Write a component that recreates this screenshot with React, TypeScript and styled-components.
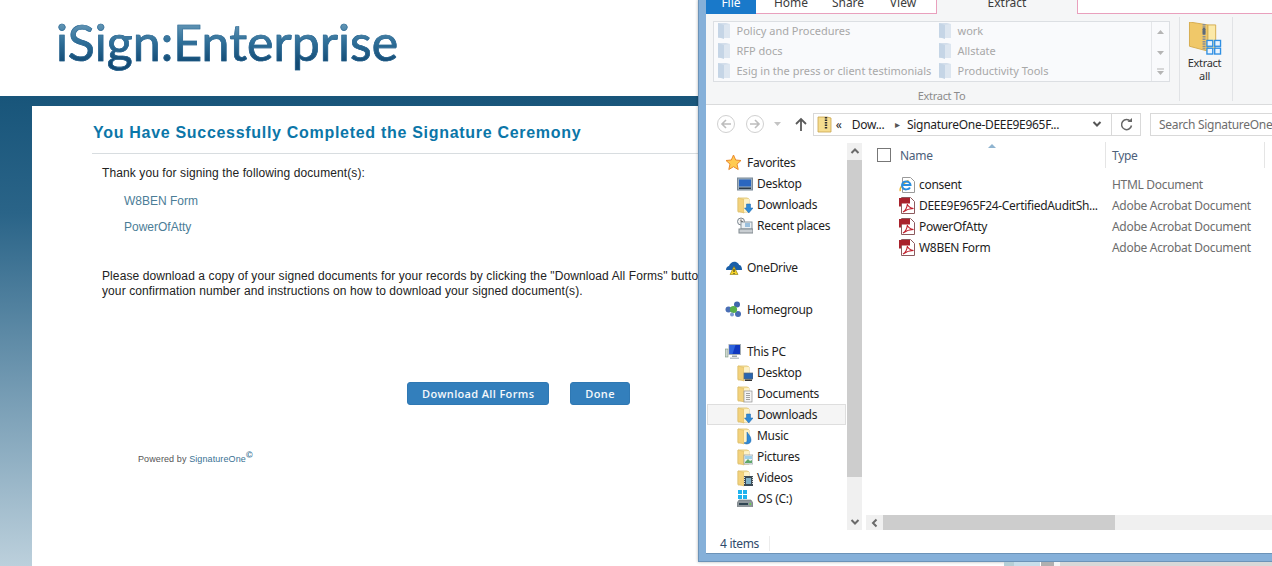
import React from 'react'
import styled, { createGlobalStyle } from 'styled-components'

const Global = createGlobalStyle`
  html, body {
    margin: 0;
    padding: 0;
    height: 566px;
    overflow: hidden;
    background: #fff;
  }
  * { box-sizing: border-box; }
`

const uiFont = `"Noto Sans", "Open Sans", sans-serif`
const webFont = `"Liberation Sans", Arial, sans-serif`

/* ---------- web page behind the explorer window ---------- */

const Page = styled.div`
  position: relative;
  width: 1272px;
  height: 566px;
  overflow: hidden;
  font-family: ${webFont};
`

const Header = styled.header`
  height: 96px;
  padding: 12px 0 0 56px;
  background: #fff;
`

const Logo = styled.div`
  display: inline-block;
  font-family: Lato, "Open Sans", sans-serif;
  font-size: 50px;
  line-height: 60px;
  letter-spacing: 0.05px;
  color: transparent;
  -webkit-text-stroke: 0.7px rgba(40, 100, 145, 0.75);
  background: linear-gradient(#6f9fbc 12%, #2f6f98 50%, #124a74 85%);
  -webkit-background-clip: text;
  background-clip: text;
`

const Band = styled.div`
  height: 470px;
  padding: 10px 0 0 32px;
  background: linear-gradient(#18557a 0%, #2a6488 25%, #6f97b0 60%, #bcd0dc 100%);
`

const Card = styled.main`
  height: 460px;
  padding: 16px 0 0 60px;
  background: #fff;
`

const Title = styled.h1`
  margin: 0 0 0 1px;
  font-size: 16px;
  line-height: 22px;
  font-weight: 700;
  letter-spacing: 0.7px;
  color: #0b76a8;
`

const Rule = styled.hr`
  height: 1px;
  margin: 9px 0 0 0;
  border: 0;
  background: #d8dde0;
`

const Lead = styled.p`
  margin: 12px 0 0 10px;
  font-size: 12px;
  line-height: 15px;
  letter-spacing: 0.1px;
  color: #222;
`

const DocLink = styled.a`
  display: block;
  margin: 0 0 11px 32px;
  font-size: 12px;
  line-height: 15px;
  color: #4b7d97;
`

const DocList = styled.div`
  margin-top: 13px;
`

const Instructions = styled.p`
  margin: 34px 0 0 10px;
  font-size: 12px;
  line-height: 15px;
  letter-spacing: 0.1px;
  color: #222;
  white-space: nowrap;
`

const Actions = styled.div`
  display: flex;
  gap: 21px;
  margin: 83px 0 0 315px;
`

const ActionButton = styled.button`
  height: 23px;
  padding: 0 14px;
  border: 1px solid #2f78b3;
  border-radius: 3px;
  background: #337fbc;
  color: #f4f8fb;
  font-family: "Open Sans", sans-serif;
  font-size: 11px;
  font-weight: 600;
  letter-spacing: 0.35px;
`

const Powered = styled.p`
  margin: 48px 0 0 46px;
  font-size: 9px;
  line-height: 12px;
  color: #555;
  letter-spacing: 0.1px;
  span { color: #3a7294; }
  sup { font-size: 9px; font-weight: 700; line-height: 0; color: #3a7294; }
`

/* ---------- explorer window ---------- */

const Explorer = styled.section`
  position: absolute;
  left: 698px;
  top: -1px;
  width: 574px;
  height: 563px;
  padding: 1px 0 7px 7px;
  display: flex;
  background: #85b0d9;
  border-left: 1px solid #6c93b8;
  border-bottom: 1px solid #6c93b8;
  box-shadow: 0 0 3px rgba(0, 0, 0, 0.3);
  font-family: ${uiFont};
  font-size: 12px;
  letter-spacing: -0.3px;
`

const ExplorerInner = styled.div`
  flex: 1;
  min-width: 0;
  display: flex;
  flex-direction: column;
  background: #fff;
  border-bottom: 1px solid #6c93b8;
`

const TabStrip = styled.nav`
  height: 14px;
  flex: none;
  display: flex;
  overflow: hidden;
  line-height: 6px;
  letter-spacing: 0;
  background: #fff;
  color: #3c3c3c;
`

const Tab = styled.div<{ $w: number }>`
  width: ${p => p.$w}px;
  flex: none;
  text-align: center;
  border-bottom: 1px solid #e9a0bd;
`

const FileTab = styled(Tab)`
  background: #1979ca;
  color: #fff;
  border-bottom: 0;
`

const ContextTab = styled(Tab)`
  background: #f5f6f7;
  border-bottom: 0;
  border-left: 1px solid #e9a0bd;
  border-right: 1px solid #e9a0bd;
`

const TabFill = styled.div`
  flex: 1;
  border-bottom: 1px solid #e9a0bd;
`

const Ribbon = styled.div`
  height: 91px;
  flex: none;
  display: flex;
  padding: 3px 0 0 7px;
  background: #f5f6f7;
  border-bottom: 1px solid #dadbdc;
`

const RibbonGroup = styled.div`
  width: 467px;
  height: 84px;
  display: flex;
  flex-direction: column;
  align-items: center;
  border-right: 1px solid #e1e3e6;
`

const Gallery = styled.div`
  width: 457px;
  height: 61px;
  margin: 4px 10px 0 0;
  display: flex;
  background: #f9fafc;
  border: 1px solid #dcdfe3;
`

const GalleryGrid = styled.div`
  flex: 1;
  margin-top: -2px;
  display: grid;
  grid-template-columns: 221px 1fr;
  grid-auto-rows: 20px;
`

const GalleryItem = styled.div`
  display: flex;
  align-items: center;
  gap: 5px;
  padding-left: 3px;
  color: #a8a8a8;
  font-size: 11px;
  letter-spacing: 0;
  white-space: nowrap;
`

const GalleryScroll = styled.div`
  width: 18px;
  flex: none;
  display: grid;
  grid-auto-rows: 20px;
  place-items: center;
  border-left: 1px solid #e4e6e9;
`

const GroupLabel = styled.div`
  margin: 6px 9px 0 0;
  line-height: 16px;
  font-size: 11px;
  color: #8c8c8c;
`

const ExtractGroup = styled.div`
  width: 53px;
  height: 84px;
  display: flex;
  flex-direction: column;
  align-items: center;
  padding: 5px 3px 0 0;
  border-right: 1px solid #e1e3e6;
  color: #333;
  font-size: 11px;
  line-height: 13px;
  text-align: center;
`

const ExtractLabel = styled.div`
  margin-top: 1px;
`

const Toolbar = styled.div`
  height: 37px;
  flex: none;
  display: flex;
  align-items: center;
  padding: 1px 0 0 11px;
  background: #fff;
`

const NavCircle = styled.div`
  width: 18px;
  height: 18px;
  margin-right: 11px;
  display: grid;
  place-items: center;
  border: 1px solid #d0d0d0;
  border-radius: 50%;
`

const AddressBox = styled.div`
  width: 328px;
  height: 23px;
  display: flex;
  align-items: center;
  padding-left: 3px;
  border: 1px solid #d9d9d9;
  color: #1e1e1e;
`

const Crumb = styled.span<{ $w: number }>`
  width: ${p => p.$w}px;
  flex: none;
  white-space: nowrap;
`

const CrumbArrow = styled(Crumb)`
  padding-left: 4px;
  font-size: 10px;
  color: #555;
`

const AddressEnd = styled.div`
  width: 29px;
  height: 21px;
  flex: none;
  display: grid;
  place-items: center;
  margin-left: auto;
`

const RefreshCell = styled(AddressEnd)`
  margin-left: 0;
  border-left: 1px solid #d9d9d9;
`

const SearchBox = styled.div`
  flex: 1;
  min-width: 0;
  height: 23px;
  margin-left: 9px;
  padding-left: 8px;
  border: 1px solid #d9d9d9;
  border-right: 0;
  line-height: 21px;
  color: #6d6d6d;
  white-space: nowrap;
  overflow: hidden;
`

const Main = styled.div`
  flex: 1;
  min-height: 0;
  display: flex;
  padding-bottom: 4px;
`

const NavPane = styled.aside`
  width: 141px;
  flex: none;
  padding: 10px 1px 0 1px;
`

const NavGroup = styled.div`
  margin-bottom: 21px;
`

const NavRow = styled.div<{ $child?: boolean; $active?: boolean }>`
  height: 21px;
  display: flex;
  align-items: center;
  gap: ${p => (p.$child ? 4 : 5)}px;
  padding-left: ${p => (p.$child ? 30 : 18)}px;
  color: #1e1e1e;
  white-space: nowrap;
  background: ${p => (p.$active ? '#f5f5f5' : 'transparent')};
  box-shadow: ${p => (p.$active ? 'inset 0 0 0 1px #dedede' : 'none')};
`

const VScroll = styled.div`
  width: 15px;
  flex: none;
  display: flex;
  flex-direction: column;
  background: #f0f0f0;
  margin-right: 4px;
  margin-top: 1px;
`

const ScrollArrow = styled.div`
  height: 17px;
  flex: none;
  display: grid;
  place-items: center;
`

const VThumb = styled.div`
  height: 317px;
  flex: none;
  background: #cdcdcd;
`

const Files = styled.div`
  flex: 1;
  min-width: 0;
  display: flex;
  flex-direction: column;
`

const ColumnHeader = styled.div`
  position: relative;
  height: 32px;
  flex: none;
  display: grid;
  grid-template-columns: 240px 159px 1fr;
  align-items: start;
  color: #4c607a;
`

const NameHead = styled.div`
  display: flex;
  align-items: center;
  gap: 9px;
  height: 26px;
  padding-left: 11px;
  border-right: 1px solid #e5e5e5;
`

const TypeHead = styled.div`
  height: 26px;
  line-height: 28px;
  padding-left: 6px;
  border-right: 1px solid #e5e5e5;
`

const SortMark = styled.svg`
  position: absolute;
  left: 122px;
  top: 2px;
`

const Check = styled.div`
  width: 14px;
  height: 14px;
  border: 1px solid #777;
`

const Rows = styled.div`
  flex: 1;
`

const FileRow = styled.div`
  height: 21px;
  display: grid;
  grid-template-columns: 240px 1fr;
  align-items: center;
`

const FileName = styled.div`
  display: flex;
  align-items: center;
  gap: 4px;
  padding-left: 33px;
  color: #1e1e1e;
  white-space: nowrap;
`

const FileType = styled.div`
  padding-left: 6px;
  color: #6d6d6d;
  white-space: nowrap;
`

const HScroll = styled.div`
  height: 15px;
  flex: none;
  display: flex;
  background: #f0f0f0;
`

const HArrow = styled.div`
  width: 17px;
  flex: none;
  display: grid;
  place-items: center;
`

const HThumb = styled.div`
  width: 232px;
  background: #cdcdcd;
`

const StatusBar = styled.footer`
  height: 19px;
  flex: none;
  display: flex;
  align-items: center;
  padding-left: 14px;
  color: #2f4a6b;
`

const StatusSep = styled.div`
  width: 1px;
  height: 15px;
  margin-left: 10px;
  background: #ececec;
`

const BackWindow = styled.div`
  position: absolute;
  left: 1004px;
  top: 562px;
  right: 0;
  height: 4px;
  display: flex;
`

const BackSliver = styled.div<{ $w?: number; $c: string }>`
  flex: ${p => (p.$w ? `0 0 ${p.$w}px` : 1)};
  background: ${p => p.$c};
`

/* ---------- icons ---------- */

type Overlay = 'download' | 'desktop' | 'docs' | 'music' | 'pictures' | 'videos'

const FolderIcon = ({ overlay }: { overlay?: Overlay }) => (
  <svg width="16" height="18" viewBox="0 0 16 18">
    <path d="M1 2h9l2 1v13H1z" fill="#fbe9a8" stroke="#dcbc68" strokeWidth="0.8" />
    <path d="M1 2l6 1.500V17l-6-2z" fill="#f3d27c" stroke="#dcbc68" strokeWidth="0.6" />
    <path d="M7 3.500l5-.5v13H7z" fill="#fdf2c8" />
    {overlay === 'download' && (
      <path d="M9.500 8h4v4H16l-4.200 5-4.300-5h2z" fill="#2f8ad6" stroke="#1a65ad" strokeWidth="0.5" />
    )}
    {overlay === 'desktop' && (
      <>
        <rect x="7" y="9" width="9" height="6" fill="#2a66b0" stroke="#5a6a7a" strokeWidth="0.7" />
        <rect x="8" y="15.500" width="7" height="1.500" fill="#333" />
      </>
    )}
    {overlay === 'docs' && (
      <>
        <rect x="7" y="6" width="8" height="11" fill="#f4f4f4" stroke="#909090" strokeWidth="0.7" />
        <path d="M9 8.500h4M9 10.500h4M9 12.500h4M9 14.500h4" stroke="#8a8a8a" strokeWidth="0.8" />
      </>
    )}
    {overlay === 'music' && (
      <path d="M10 5c1 2 4 4 4 8 0 3-2 4-5 4l-2-1c1-1 3 0 3-2z" fill="#2f8ad6" stroke="#1a65ad" strokeWidth="0.5" />
    )}
    {overlay === 'pictures' && (
      <>
        <rect x="7" y="7" width="9" height="9" fill="#eef3f5" stroke="#8f9aa0" strokeWidth="0.7" />
        <path d="M8 14l3-3 2 2 2-1v3H8z" fill="#5fa86a" />
        <rect x="8" y="8" width="7" height="3" fill="#9fd0ea" />
      </>
    )}
    {overlay === 'videos' && (
      <>
        <rect x="7" y="7" width="9" height="10" fill="#3c4a55" />
        <rect x="9" y="9" width="5" height="6" fill="#7fb0c8" />
        <path d="M7.500 8v8M15.500 8v8" stroke="#ddd" strokeWidth="1" strokeDasharray="1 1" />
      </>
    )}
  </svg>
)

const PaleFolder = () => (
  <svg width="15" height="17" viewBox="0 0 15 17">
    <path d="M1 1h8l4 1v14H1z" fill="#d3deeb" />
    <path d="M1 1l6 2v14l-6-2z" fill="#c5d5e6" />
    <path d="M7 3l6-1v14H7z" fill="#dde6f0" />
  </svg>
)

const ZipFolder = () => (
  <svg width="34" height="33" viewBox="0 1 34 34">
    <path d="M1 1l19 3v27L1 26z" fill="#f0c869" stroke="#d6ac50" />
    <path d="M20 4h8v23l-8 4z" fill="#fbe9a8" stroke="#d6ac50" />
    <path d="M16 3v26" stroke="#8a8f96" strokeWidth="3" strokeDasharray="1.500 1" />
    <rect x="14.500" y="7" width="3" height="7" rx="1.400" fill="#5d6a78" />
    <g fill="#eaf4fd" stroke="#2f8fe3" strokeWidth="1.400">
      <rect x="19" y="20" width="6" height="6" />
      <rect x="27" y="20" width="6" height="6" />
      <rect x="19" y="28" width="6" height="6" />
      <rect x="27" y="28" width="6" height="6" />
    </g>
  </svg>
)

const StarIcon = () => (
  <svg width="17" height="17" viewBox="0 0 17 17">
    <path
      d="M8.500 1l2.200 5 5.300.5-4 3.600 1.200 5.400-4.700-2.800-4.700 2.800 1.200-5.400-4-3.600 5.300-.5z"
      fill="#ffcb52"
      stroke="#ea8a2e"
      strokeWidth="1"
    />
  </svg>
)

const MonitorIcon = () => (
  <svg width="16" height="14" viewBox="0 0 16 14">
    <rect x="0.500" y="1" width="15" height="12" fill="#9fb0bf" stroke="#7b8a98" />
    <rect x="2" y="2.500" width="12" height="7" fill="#2a66c0" />
    <rect x="2" y="10.500" width="12" height="1.500" fill="#2b3a4a" />
  </svg>
)

const RecentIcon = () => (
  <svg width="16" height="17" viewBox="0 0 16 17">
    <circle cx="4" cy="4.500" r="3.500" fill="#f2f2f2" stroke="#7d8790" />
    <path d="M4 2.500v2h2" stroke="#555" fill="none" />
    <rect x="4" y="5" width="11" height="7" fill="#e9eff3" stroke="#8b979f" />
    <path d="M8 7h5M8 9h5" stroke="#4a90c8" />
    <rect x="2" y="12" width="14" height="4" fill="#c9ced2" stroke="#80898f" />
  </svg>
)

const OneDriveIcon = () => (
  <svg width="17" height="15" viewBox="0 0 17 15">
    <path d="M1 10c0-3 2-4 3-4 1-3 4-5 7-4 2 1 3 2 3 3 2 0 3 2 3 5H7z" fill="#1a5fa8" />
    <path d="M5 14.500l4-8 4 8z" fill="#f5d327" stroke="#8a7a10" strokeWidth="0.6" />
    <path d="M9 9v3M9 13v1" stroke="#222" strokeWidth="1" />
  </svg>
)

const HomegroupIcon = () => (
  <svg width="17" height="17" viewBox="0 0 17 17">
    <circle cx="3.500" cy="8.500" r="3" fill="#4a6fb5" />
    <circle cx="12" cy="3.500" r="3" fill="#3f66ad" />
    <circle cx="13" cy="13" r="3" fill="#466cb3" />
    <circle cx="8.500" cy="8.500" r="3.600" fill="#58b04a" />
    <circle cx="7" cy="13.500" r="2" fill="#7a9ad0" />
  </svg>
)

const ThisPcIcon = () => (
  <svg width="17" height="16" viewBox="0 0 17 16">
    <rect x="0.500" y="5" width="2.500" height="8" fill="#cfd6d0" stroke="#7f9a84" strokeWidth="0.6" />
    <rect x="4" y="0.500" width="11.500" height="10" fill="#1038c0" stroke="#a4adb5" />
    <path d="M4.500 1h6l-3 9h-3z" fill="#2d63dd" />
    <rect x="7" y="11.500" width="5" height="1.500" fill="#9aa3aa" />
    <rect x="5" y="13.500" width="9" height="1.500" fill="#bcc4ca" />
  </svg>
)

const DriveIcon = () => (
  <svg width="16" height="17" viewBox="0 0 16 17">
    <g fill="#1fb3ee">
      <rect x="1" y="0" width="4" height="4" />
      <rect x="6" y="0" width="4" height="4" />
      <rect x="1" y="5" width="4" height="4" />
      <rect x="6" y="5" width="4" height="4" />
    </g>
    <path d="M2 10h12l2 3v3.500H0V13z" fill="#8f979c" stroke="#687076" strokeWidth="0.6" />
    <rect x="2" y="13" width="9" height="2" fill="#2f4552" />
    <rect x="12.500" y="13" width="1.500" height="2" fill="#65d04a" />
  </svg>
)

const IeDocIcon = () => (
  <svg width="16" height="16" viewBox="0 0 16 16">
    <path d="M3.500 .5h8l4 4v11h-12z" fill="#fff" stroke="#9a9a9a" />
    <path d="M1.500 14c-1.500-2 2-8 8-10.500" fill="none" stroke="#f0b428" strokeWidth="1.400" />
    <path
      d="M11 10.500c-1 2-6 3-7.500 0-1.500-3 .5-6 3.500-6 3 0 4.500 2 4.500 3.500H4"
      fill="none"
      stroke="#2b8fde"
      strokeWidth="2"
    />
  </svg>
)

const PdfIcon = () => (
  <svg width="16" height="17" viewBox="0 0 16 17">
    <path d="M2.500 .5h9l4 4v12h-13z" fill="#fff" stroke="#8c5a5e" />
    <path d="M0 1h11v5.500H2v3H0z" fill="#a9222c" />
    <path
      d="M4 15c2-1 4-5 4.500-8 .5 2.500 3 4 6 4.500-4 0-7 1-10.500 3.500z"
      fill="none"
      stroke="#c01f2c"
      strokeWidth="1.200"
    />
  </svg>
)

const Chevron = ({ dir, color = '#6a6a6a' }: { dir: 'up' | 'down' | 'left'; color?: string }) => {
  const d = { up: 'M1.500 6l3.500-3.500L8.500 6', down: 'M1.500 3l3.500 3.500L8.500 3', left: 'M6.500 1.500L3 5l3.500 3.500' }[dir]
  return (
    <svg width="10" height="10" viewBox="0 0 10 10">
      <path d={d} fill="none" stroke={color} strokeWidth="2" />
    </svg>
  )
}

const TinyTriangle = ({ flip, bar }: { flip?: boolean; bar?: boolean }) => (
  <svg width="9" height="8" viewBox="0 0 9 8">
    {bar && <path d="M1 1h7" stroke="#b5b5b5" />}
    <path d={flip ? 'M1 3h7L4.500 7z' : 'M1 6h7L4.500 2z'} fill="#b5b5b5" />
  </svg>
)

const RoundArrow = ({ back }: { back?: boolean }) => (
  <svg width="12" height="12" viewBox="0 0 12 12">
    <path
      d={back ? 'M11 6H2M6 2L2 6l4 4' : 'M1 6h9M6 2l4 4-4 4'}
      fill="none"
      stroke="#bdbdbd"
      strokeWidth="1.600"
    />
  </svg>
)

const UpArrow = styled.svg`
  margin-right: 6px;
`

const DropMark = styled.svg`
  margin: 0 13px 0 -1px;
`

const ZipMini = () => (
  <svg width="16" height="18" viewBox="0 0 16 18">
    <path d="M1 2h9l4 1v14H1z" fill="#f6dd8f" stroke="#c9a54e" strokeWidth="0.8" />
    <path d="M9 2v12" stroke="#333" strokeWidth="2.400" strokeDasharray="1.500 1" />
  </svg>
)

/* ---------- data ---------- */

const gallery = [
  'Policy and Procedures',
  'work',
  'RFP docs',
  'Allstate',
  'Esig in the press or client testimonials',
  'Productivity Tools',
]

const files = [
  { name: 'consent', type: 'HTML Document', icon: <IeDocIcon /> },
  { name: 'DEEE9E965F24-CertifiedAuditSh...', type: 'Adobe Acrobat Document', icon: <PdfIcon /> },
  { name: 'PowerOfAtty', type: 'Adobe Acrobat Document', icon: <PdfIcon /> },
  { name: 'W8BEN Form', type: 'Adobe Acrobat Document', icon: <PdfIcon /> },
]

const pcItems: { label: string; overlay: Overlay; active?: boolean }[] = [
  { label: 'Desktop', overlay: 'desktop' },
  { label: 'Documents', overlay: 'docs' },
  { label: 'Downloads', overlay: 'download', active: true },
  { label: 'Music', overlay: 'music' },
  { label: 'Pictures', overlay: 'pictures' },
  { label: 'Videos', overlay: 'videos' },
]

export default function App() {
  return (
    <Page>
      <Global />
      <Header>
        <Logo>iSign:Enterprise</Logo>
      </Header>
      <Band>
        <Card>
          <Title>You Have Successfully Completed the Signature Ceremony</Title>
          <Rule />
          <Lead>Thank you for signing the following document(s):</Lead>
          <DocList>
            <DocLink>W8BEN Form</DocLink>
            <DocLink>PowerOfAtty</DocLink>
          </DocList>
          <Instructions>
            Please download a copy of your signed documents for your records by clicking the "Download All Forms" button
            <br />
            your confirmation number and instructions on how to download your signed document(s).
          </Instructions>
          <Actions>
            <ActionButton>Download All Forms</ActionButton>
            <ActionButton>Done</ActionButton>
          </Actions>
          <Powered>
            Powered by <span>SignatureOne</span>
            <sup>©</sup>
          </Powered>
        </Card>
      </Band>

      <Explorer>
        <ExplorerInner>
          <TabStrip>
            <FileTab $w={50}>File</FileTab>
            <Tab $w={70}>Home</Tab>
            <Tab $w={44}>Share</Tab>
            <Tab $w={66}>View</Tab>
            <ContextTab $w={142}>Extract</ContextTab>
            <TabFill />
          </TabStrip>
          <Ribbon>
            <RibbonGroup>
              <Gallery>
                <GalleryGrid>
                  {gallery.map(label => (
                    <GalleryItem key={label}>
                      <PaleFolder />
                      {label}
                    </GalleryItem>
                  ))}
                </GalleryGrid>
                <GalleryScroll>
                  <TinyTriangle />
                  <TinyTriangle flip />
                  <TinyTriangle flip bar />
                </GalleryScroll>
              </Gallery>
              <GroupLabel>Extract To</GroupLabel>
            </RibbonGroup>
            <ExtractGroup>
              <ZipFolder />
              <ExtractLabel>
                Extract
                <br />
                all
              </ExtractLabel>
            </ExtractGroup>
          </Ribbon>

          <Toolbar>
            <NavCircle>
              <RoundArrow back />
            </NavCircle>
            <NavCircle>
              <RoundArrow />
            </NavCircle>
            <DropMark width="8" height="5" viewBox="0 0 8 5">
              <path d="M0 0h7L3.500 4z" fill="#c4c4c4" />
            </DropMark>
            <UpArrow width="12" height="14" viewBox="0 0 12 14">
              <path d="M6 14V2M1 7l5-5 5 5" fill="none" stroke="#5a5a5a" strokeWidth="1.800" />
            </UpArrow>
            <AddressBox>
              <ZipMini />
              <Crumb $w={16}>&nbsp;«</Crumb>
              <Crumb $w={42}>&nbsp;Dow...</Crumb>
              <CrumbArrow $w={16}>▸</CrumbArrow>
              <Crumb $w={150}>SignatureOne-DEEE9E965F...</Crumb>
              <AddressEnd>
                <Chevron dir="down" color="#555" />
              </AddressEnd>
              <RefreshCell>
                <svg width="13" height="13" viewBox="0 0 13 13">
                  <path d="M10.500 3.500a5 5 0 1 0 1 4" fill="none" stroke="#666" strokeWidth="1.500" />
                  <path d="M7.500 4h4.500V0z" fill="#666" />
                </svg>
              </RefreshCell>
            </AddressBox>
            <SearchBox>Search SignatureOne-DEEE9E965F24</SearchBox>
          </Toolbar>

          <Main>
            <NavPane>
              <NavGroup>
                <NavRow>
                  <StarIcon />
                  Favorites
                </NavRow>
                <NavRow $child>
                  <MonitorIcon />
                  Desktop
                </NavRow>
                <NavRow $child>
                  <FolderIcon overlay="download" />
                  Downloads
                </NavRow>
                <NavRow $child>
                  <RecentIcon />
                  Recent places
                </NavRow>
              </NavGroup>
              <NavGroup>
                <NavRow>
                  <OneDriveIcon />
                  OneDrive
                </NavRow>
              </NavGroup>
              <NavGroup>
                <NavRow>
                  <HomegroupIcon />
                  Homegroup
                </NavRow>
              </NavGroup>
              <NavGroup>
                <NavRow>
                  <ThisPcIcon />
                  This PC
                </NavRow>
                {pcItems.map(item => (
                  <NavRow $child $active={item.active} key={item.label}>
                    <FolderIcon overlay={item.overlay} />
                    {item.label}
                  </NavRow>
                ))}
                <NavRow $child>
                  <DriveIcon />
                  OS (C:)
                </NavRow>
              </NavGroup>
            </NavPane>

            <VScroll>
              <ScrollArrow>
                <Chevron dir="up" />
              </ScrollArrow>
              <VThumb />
              <Rows />
              <ScrollArrow>
                <Chevron dir="down" />
              </ScrollArrow>
            </VScroll>

            <Files>
              <ColumnHeader>
                <NameHead>
                  <Check />
                  Name
                </NameHead>
                <SortMark width="8" height="4" viewBox="0 0 8 4">
                  <path d="M0 4l4-4 4 4z" fill="#8fb4d0" />
                </SortMark>
                <TypeHead>Type</TypeHead>
              </ColumnHeader>
              <Rows>
                {files.map(file => (
                  <FileRow key={file.name}>
                    <FileName>
                      {file.icon}
                      {file.name}
                    </FileName>
                    <FileType>{file.type}</FileType>
                  </FileRow>
                ))}
              </Rows>
              <HScroll>
                <HArrow>
                  <Chevron dir="left" />
                </HArrow>
                <HThumb />
              </HScroll>
            </Files>
          </Main>

          <StatusBar>
            4 items
            <StatusSep />
          </StatusBar>
        </ExplorerInner>
      </Explorer>

      <BackWindow>
        <BackSliver $w={10} $c="#b5cfd6" />
        <BackSliver $w={26} $c="#c8deea" />
        <BackSliver $w={1} $c="#fff" />
        <BackSliver $w={13} $c="#b0b0b0" />
        <BackSliver $w={6} $c="#f4f4f4" />
        <BackSliver $c="#d8d8d8" />
      </BackWindow>
    </Page>
  )
}
